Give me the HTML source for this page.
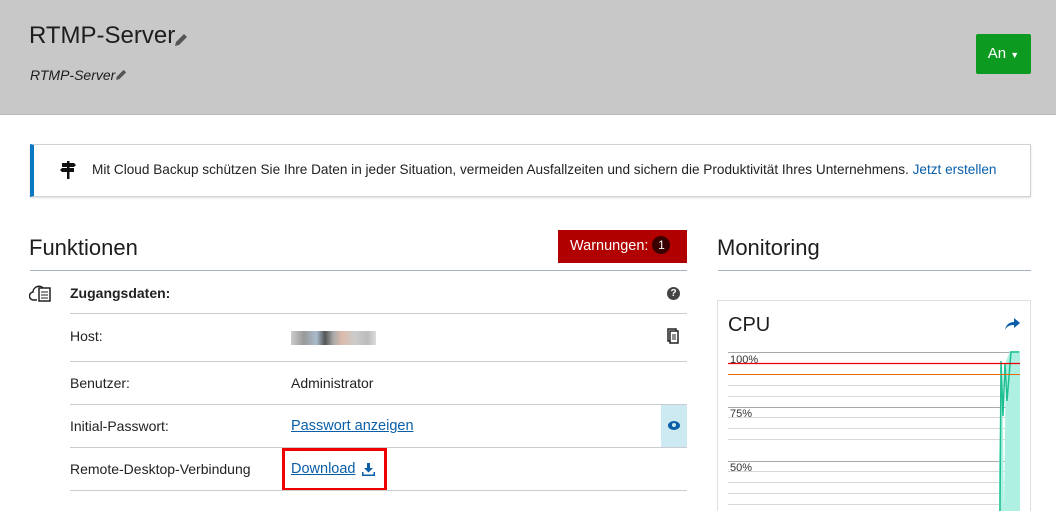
<!DOCTYPE html>
<html style="width:1056px;height:511px;overflow:hidden"><head><meta charset="utf-8"><style>
*{margin:0;padding:0;box-sizing:border-box}
body{width:1056px;height:511px;overflow:hidden;background:#fff;font-family:"Liberation Sans",sans-serif;color:#222;position:relative}
.a{position:absolute;white-space:nowrap}
.hl{position:absolute;height:1px;background:#c9ccd0}
a{color:#0a5ea8;text-decoration:underline}
</style></head><body>
<div class="a" style="left:0;top:0;width:1056px;height:115px;background:#c8c8c8;border-bottom:1px solid #b8bcc0"></div>
<div class="a" style="left:29px;top:22px;font-size:24px;color:#1d1d1d">RTMP-Server</div>
<svg class="a" style="left:175px;top:33px" width="13" height="13" viewBox="0 0 13 13"><path d="M0 13l1-4 8-8 3 3-8 8z" fill="#555"/></svg>
<div class="a" style="left:30px;top:67px;font-size:14px;font-style:italic;color:#1d1d1d">RTMP-Server</div>
<svg class="a" style="left:116px;top:69px" width="11" height="11" viewBox="0 0 13 13"><path d="M0 13l1-4 8-8 3 3-8 8z" fill="#555"/></svg>
<div class="a" style="left:976px;top:34px;width:55px;height:40px;background:#0d9a20;border-radius:2px;color:#fff;font-size:15px;line-height:40px;text-align:center">An <span style="font-size:9px">&#9660;</span></div>

<div class="a" style="left:30px;top:144px;width:1001px;height:53px;border:1px solid #d0d3d6;border-left:4px solid #0a78c0;box-shadow:0 1px 2px #ddd"></div>
<svg class="a" style="left:60px;top:160px" width="16" height="20" viewBox="0 0 16 20"><rect x="7" y="1" width="2.5" height="18" fill="#111"/><path d="M2 3h12l2 2-2 2H2z M0 10l2-2h12v4H2z" fill="#111"/></svg>
<div class="a" style="left:92px;top:162px;font-size:13.6px;color:#222">Mit Cloud Backup schützen Sie Ihre Daten in jeder Situation, vermeiden Ausfallzeiten und sichern die Produktivität Ihres Unternehmens. <span style="color:#0a5ea8">Jetzt erstellen</span></div>

<div class="a" style="left:29px;top:235px;font-size:22px;color:#1d1d1d">Funktionen</div>
<div class="a" style="left:558px;top:230px;width:129px;height:33px;background:#b00000;color:#fff;font-size:14.5px;line-height:33px;padding-left:12px">Warnungen: <span style="display:inline-block;width:18px;height:18px;border-radius:9px;background:#3a0000;text-align:center;line-height:18px;font-size:12px;vertical-align:middle;margin-top:-3px">1</span></div>
<div class="hl" style="left:30px;top:270px;width:657px;background:#a9b2ba"></div>

<svg class="a" style="left:29px;top:282px" width="24" height="20" viewBox="0 0 24 20"><path d="M8 18H5a4 4 0 0 1-1-8 6 6 0 0 1 11-3" fill="none" stroke="#222" stroke-width="1.5"/><rect x="10" y="6" width="11" height="13" fill="#fff" stroke="#222" stroke-width="1.5"/><path d="M12 10h7M12 13h7M12 16h7" stroke="#222"/></svg>
<div class="a" style="left:70px;top:285px;font-size:14px;font-weight:bold">Zugangsdaten:</div>
<div class="a" style="left:667px;top:287px;width:13px;height:13px;border-radius:7px;background:#444;color:#fff;font-size:10px;font-weight:bold;text-align:center;line-height:13px">?</div>
<div class="hl" style="left:70px;top:313px;width:617px"></div>

<div class="a" style="left:70px;top:328px;font-size:14px">Host:</div>
<div class="a" style="left:291px;top:331px;width:85px;height:14px;background:linear-gradient(90deg,#ccc,#999 15%,#abc 30%,#555 40%,#aaa 50%,#dba 60%,#ccc 75%,#bbb 90%,#ddd)"></div>
<svg class="a" style="left:667px;top:328px" width="12" height="16" viewBox="0 0 12 16"><rect x="1" y="1" width="8" height="12" fill="none" stroke="#222" stroke-width="1.5"/><rect x="3" y="3" width="8" height="12" fill="#fff" stroke="#222" stroke-width="1.5"/><path d="M5 7h4M5 9h4M5 11h4" stroke="#222"/></svg>
<div class="hl" style="left:70px;top:361px;width:617px"></div>

<div class="a" style="left:70px;top:375px;font-size:14px">Benutzer:</div>
<div class="a" style="left:291px;top:375px;font-size:14px">Administrator</div>
<div class="hl" style="left:70px;top:404px;width:617px"></div>

<div class="a" style="left:661px;top:405px;width:26px;height:42px;background:#cde9f2"></div>
<div class="a" style="left:668px;top:421px;width:12px;height:9px;border-radius:50%;background:#0a5ea8"></div>
<div class="a" style="left:672px;top:423px;width:4px;height:4px;border-radius:50%;background:#cde9f2"></div>
<div class="a" style="left:70px;top:418px;font-size:14px">Initial-Passwort:</div>
<div class="a" style="left:291px;top:418px;font-size:14.5px"><a>Passwort anzeigen</a></div>
<div class="hl" style="left:70px;top:447px;width:617px"></div>

<div class="a" style="left:70px;top:461px;font-size:14px">Remote-Desktop-Verbindung</div>
<div class="a" style="left:282px;top:448px;width:105px;height:43px;border:3px solid #e00"></div>
<div class="a" style="left:291px;top:461px;font-size:14.5px"><a>Download</a></div>
<svg class="a" style="left:362px;top:463px" width="13" height="13" viewBox="0 0 13 13"><path d="M5 0h3v5h3l-4.5 4.5L2 5h3z" fill="#0a5ea8"/><path d="M0 9v4h13V9h-1.5v2.5h-10V9z" fill="#0a5ea8"/></svg>
<div class="hl" style="left:70px;top:490px;width:617px"></div>

<div class="a" style="left:717px;top:235px;font-size:22px;color:#1d1d1d">Monitoring</div>
<div class="hl" style="left:718px;top:270px;width:313px;background:#a9b2ba"></div>
<div class="a" style="left:717px;top:300px;width:314px;height:215px;border:1px solid #dcdfe2"></div>
<div class="a" style="left:728px;top:314px;font-size:20px;color:#1d1d1d">CPU</div>
<svg class="a" style="left:1005px;top:318px" width="15" height="12" viewBox="0 0 15 12"><path d="M0 12C1 6 5 4 9 4V0l6 5-6 5V7C5 7 2 8 0 12z" fill="#0a5ea8"/></svg>
<svg class="a" style="left:728px;top:351px" width="292" height="160" viewBox="0 0 292 160">
<g stroke="#d8d8d8" stroke-width="1">
<path d="M0 34.5h292M0 45.5h292M0 66.5h292M0 77.5h292M0 88.5h292M0 120.5h292M0 131.5h292M0 142.5h292M0 153.5h292"/></g>
<g stroke="#aaa"><path d="M0 1.5h292M0 56.5h292M0 110.5h292"/></g>
<path d="M271 160L271 110L274 10L276 160L278 10L282 0L292 0L292 160z" fill="#aef0e2"/>
<path d="M272 160L273 10L275 65L277 12L279 50L283 1L291 1" fill="none" stroke="#1cc090" stroke-width="1.5"/>
<path d="M0 12.5h292" stroke="#e00" stroke-width="1.3"/>
<path d="M0 23.5h292" stroke="#e86a10"/>
</svg>
<div class="a" style="left:730px;top:354px;font-size:11px;color:#333">100%</div>
<div class="a" style="left:730px;top:408px;font-size:11px;color:#333">75%</div>
<div class="a" style="left:730px;top:462px;font-size:11px;color:#333">50%</div>
</body></html>
